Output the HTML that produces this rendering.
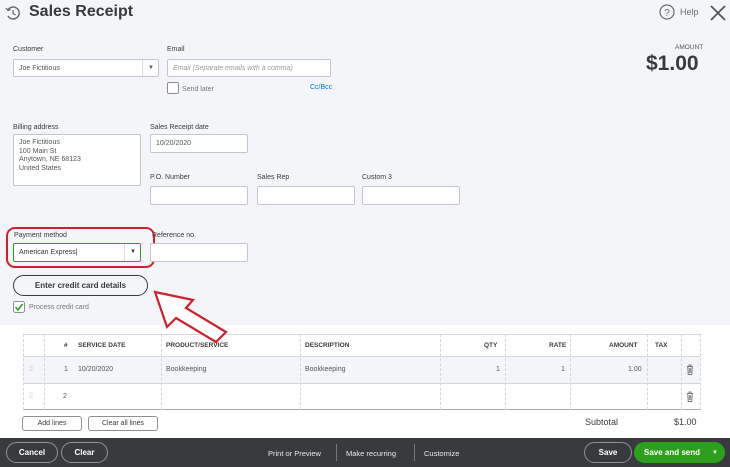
<!DOCTYPE html>
<html><head><style>
*{box-sizing:border-box;margin:0;padding:0}
body{width:730px;height:467px;overflow:hidden;background:#f4f5f8;font-family:"Liberation Sans",sans-serif;color:#393a3d;position:relative}
.a{position:absolute}
.lbl{position:absolute;font-size:7px;color:#393a3d}
.in{position:absolute;background:#fff;border:1px solid #c4c6ca;border-radius:2px;font-size:7px;padding:0 5px;display:flex;align-items:center;color:#555}
.th{position:absolute;font-size:6.5px;font-weight:bold;color:#393a3d;top:342px}
.td{position:absolute;font-size:7px;color:#555}
.vl{position:absolute;width:0;border-left:1px dashed #d5d6d8}
.btn{position:absolute;border:1px solid #8d9096;border-radius:3px;background:#fff;font-size:7px;display:flex;align-items:center;justify-content:center;color:#393a3d}
.fb{position:absolute;border:1px solid #8d9096;border-radius:12px;color:#fff;font-size:8px;font-weight:bold;display:flex;align-items:center;justify-content:center;height:21px;top:442px}
.ft{position:absolute;color:#e8e8e8;font-size:7.5px;top:449px}
</style></head><body>
<svg class="a" style="left:5px;top:5px" width="16" height="16" viewBox="0 0 16 16"><path d="M3 5 A6 6 0 1 1 3 11" fill="none" stroke="#6b6c72" stroke-width="1.5"/><path d="M8 5v3.5l2.5 1.5" fill="none" stroke="#6b6c72" stroke-width="1.3"/><path d="M1 3l2 2.5 2.5-1" fill="none" stroke="#6b6c72" stroke-width="1.3"/></svg>
<div class="a" style="left:29px;top:3px;font-size:16px;font-weight:bold;color:#393a3d">Sales Receipt</div>
<svg class="a" style="left:659px;top:4px" width="16" height="16"><circle cx="8" cy="8" r="7" fill="none" stroke="#6b6c72" stroke-width="1.2"/><text x="8" y="12" font-size="10" text-anchor="middle" fill="#6b6c72" font-family="Liberation Sans">?</text></svg>
<div class="a" style="left:680px;top:7px;font-size:9px;color:#6b6c72">Help</div>
<svg class="a" style="left:710px;top:5px" width="16" height="16"><path d="M1 1L15 15M15 1L1 15" stroke="#555" stroke-width="1.8"/></svg>
<div class="a" style="left:675px;top:44px;font-size:6.5px;color:#555">AMOUNT</div>
<div class="a" style="left:646px;top:52px;font-size:21px;font-weight:bold;color:#393a3d">$1.00</div>

<div class="lbl" style="left:13px;top:46px">Customer</div>
<div class="in" style="left:13px;top:59px;width:146px;height:18px">Joe Fictitious<span style="position:absolute;left:128px;top:0;height:16px;border-left:1px solid #ddd;width:17px;text-align:center;line-height:16px;font-size:6px">▼</span></div>
<div class="lbl" style="left:167px;top:46px">Email</div>
<div class="in" style="left:167px;top:59px;width:164px;height:18px;font-style:italic;color:#999">Email (Separate emails with a comma)</div>
<div class="a" style="left:167px;top:82px;width:12px;height:12px;border:1px solid #8d9096;border-radius:2px;background:#fff"></div>
<div class="lbl" style="left:182px;top:86px;color:#777">Send later</div>
<div class="lbl" style="left:310px;top:84px;color:#0077c5">Cc/Bcc</div>

<div class="lbl" style="left:13px;top:124px">Billing address</div>
<div class="in" style="left:13px;top:134px;width:128px;height:52px;align-items:flex-start;padding-top:4px;line-height:8.5px;color:#555">Joe Fictitious<br>100 Main St<br>Anytown, NE 68123<br>United States</div>
<div class="lbl" style="left:150px;top:124px">Sales Receipt date</div>
<div class="in" style="left:150px;top:134px;width:98px;height:19px">10/20/2020</div>
<div class="lbl" style="left:150px;top:174px">P.O. Number</div>
<div class="in" style="left:150px;top:186px;width:98px;height:19px"></div>
<div class="lbl" style="left:257px;top:174px">Sales Rep</div>
<div class="in" style="left:257px;top:186px;width:98px;height:19px"></div>
<div class="lbl" style="left:362px;top:174px">Custom 3</div>
<div class="in" style="left:362px;top:186px;width:98px;height:19px"></div>

<div class="lbl" style="left:14px;top:232px">Payment method</div>
<div class="in" style="left:13px;top:243px;width:128px;height:19px;border-color:#2ca01c;color:#333">American Express|<span style="position:absolute;left:110px;top:0;height:17px;border-left:1px solid #ddd;width:17px;text-align:center;line-height:17px;font-size:6px">▼</span></div>
<div class="a" style="left:6px;top:227px;width:149px;height:41px;border:2.5px solid #d0202f;border-radius:9px"></div>
<div class="lbl" style="left:152px;top:232px">Reference no.</div>
<div class="in" style="left:150px;top:243px;width:98px;height:19px"></div>
<div class="a" style="left:13px;top:275px;width:135px;height:21px;border:1.5px solid #393a3d;border-radius:11px;background:#f4f5f8;font-size:8px;font-weight:bold;display:flex;align-items:center;justify-content:center">Enter credit card details</div>
<svg class="a" style="left:13px;top:301px" width="12" height="12"><rect x=".5" y=".5" width="11" height="11" rx="2" fill="#fff" stroke="#8d9096"/><path d="M2.5 6l2.5 3 4.5-6" fill="none" stroke="#2ca01c" stroke-width="1.6"/></svg>
<div class="lbl" style="left:29px;top:304px;color:#777">Process credit card</div>

<div class="a" style="left:0;top:325px;width:730px;height:113px;background:#fff"></div>
<div class="a" style="left:23px;top:334px;width:677px;height:76px;border-top:1px solid #d5d6d8;border-bottom:1px solid #aaa"></div>
<div class="a" style="left:23px;top:356px;width:677px;height:28px;background:#f4f5f8;border-top:1px solid #d5d6d8;border-bottom:1px solid #d5d6d8"></div>
<div class="vl" style="left:23px;top:334px;height:76px"></div>
<div class="vl" style="left:44px;top:334px;height:76px"></div>
<div class="vl" style="left:161px;top:334px;height:76px"></div>
<div class="vl" style="left:300px;top:334px;height:76px"></div>
<div class="vl" style="left:440px;top:334px;height:76px"></div>
<div class="vl" style="left:505px;top:334px;height:76px"></div>
<div class="vl" style="left:570px;top:334px;height:76px"></div>
<div class="vl" style="left:647px;top:334px;height:76px"></div>
<div class="vl" style="left:681px;top:334px;height:76px"></div>
<div class="vl" style="left:700px;top:334px;height:76px"></div>
<div class="th" style="left:64px">#</div>
<div class="th" style="left:78px">SERVICE DATE</div>
<div class="th" style="left:166px">PRODUCT/SERVICE</div>
<div class="th" style="left:305px">DESCRIPTION</div>
<div class="th" style="left:484px">QTY</div>
<div class="th" style="left:549px">RATE</div>
<div class="th" style="left:609px">AMOUNT</div>
<div class="th" style="left:655px">TAX</div>
<div class="td" style="left:29px;top:366px;color:#aaa">⁞⁞</div>
<div class="td" style="left:64px;top:366px">1</div>
<div class="td" style="left:78px;top:366px">10/20/2020</div>
<div class="td" style="left:166px;top:366px">Bookkeeping</div>
<div class="td" style="left:305px;top:366px">Bookkeeping</div>
<div class="td" style="left:496px;top:366px">1</div>
<div class="td" style="left:561px;top:366px">1</div>
<div class="td" style="left:628px;top:366px">1.00</div>
<svg class="a" style="left:686px;top:364px" width="8" height="11"><path d="M1 2.5h6M3 2.5V1h2v1.5M1.7 2.5l.5 8h3.6l.5-8M3.3 4v5M4.7 4v5" fill="none" stroke="#777" stroke-width=".9"/></svg>
<div class="td" style="left:29px;top:393px;color:#aaa">⁞⁞</div>
<div class="td" style="left:63px;top:393px">2</div>
<svg class="a" style="left:686px;top:391px" width="8" height="11"><path d="M1 2.5h6M3 2.5V1h2v1.5M1.7 2.5l.5 8h3.6l.5-8M3.3 4v5M4.7 4v5" fill="none" stroke="#777" stroke-width=".9"/></svg>
<div class="btn" style="left:22px;top:416px;width:60px;height:15px">Add lines</div>
<div class="btn" style="left:88px;top:416px;width:70px;height:15px">Clear all lines</div>
<div class="a" style="left:585px;top:417px;font-size:9px">Subtotal</div>
<div class="a" style="left:674px;top:417px;font-size:9px">$1.00</div>

<svg class="a" style="left:0;top:0" width="730" height="467"><path d="M155 292 L193 300 L186 308 L226 332 L216 342 L176 318 L167 327 Z" fill="#fff" stroke="#d0202f" stroke-width="2.2" stroke-linejoin="miter"/></svg>

<div class="a" style="left:0;top:438px;width:730px;height:29px;background:#393a3d"></div>
<div class="fb" style="left:6px;width:52px">Cancel</div>
<div class="fb" style="left:61px;width:47px">Clear</div>
<div class="ft" style="left:268px">Print or Preview</div>
<div class="a" style="left:336px;top:444px;height:17px;border-left:1px solid #777"></div>
<div class="ft" style="left:346px">Make recurring</div>
<div class="a" style="left:414px;top:444px;height:17px;border-left:1px solid #777"></div>
<div class="ft" style="left:424px">Customize</div>
<div class="fb" style="left:584px;width:48px">Save</div>
<div class="fb" style="left:634px;width:91px;background:#2ca01c;border-color:#2ca01c;justify-content:flex-start;padding-left:9px">Save and send<span style="position:absolute;right:6px;font-size:6px">▼</span></div>
</body></html>
